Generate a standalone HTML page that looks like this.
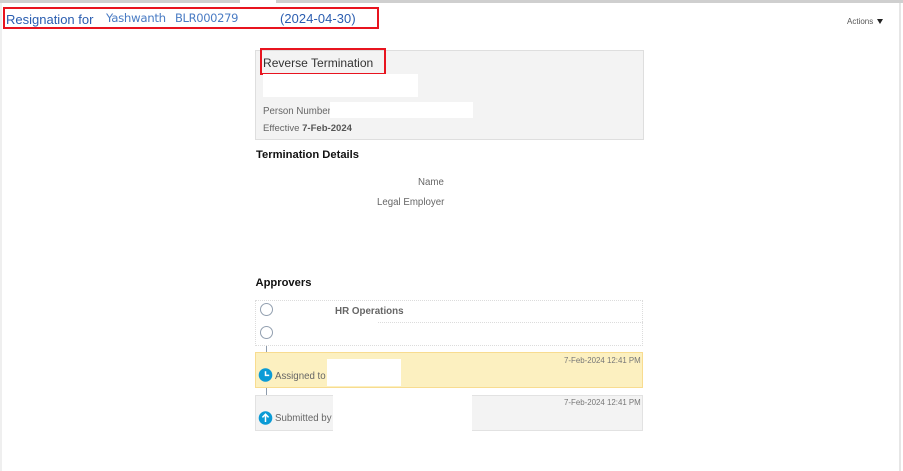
<!DOCTYPE html>
<html>
<head>
<meta charset="utf-8">
<style>
html,body{margin:0;padding:0;background:#fff;}
body{width:903px;height:471px;position:relative;overflow:hidden;font-family:"Liberation Sans",sans-serif;}
.a{position:absolute;box-sizing:border-box;}
.t{position:absolute;white-space:nowrap;line-height:1;color:#666;font-size:9.7px;filter:blur(.35px);}
</style>
</head>
<body>
<!-- top strip -->
<div class="a" style="left:0;top:0;width:240px;height:3px;background:#cfcfcf"></div>
<div class="a" style="left:276px;top:0;width:627px;height:3px;background:#cfcfcf"></div>
<div class="a" style="left:0;top:3px;width:2px;height:468px;background:#efefef"></div>
<div class="a" style="left:899px;top:3px;width:2px;height:468px;background:#e6e6e6"></div>

<!-- title -->
<div class="a" style="left:3px;top:7px;width:376px;height:22px;border:2px solid #e8141f"></div>
<div class="t" style="left:6px;top:12.5px;font-size:13px;color:#2a5db0">Resignation for</div>
<div class="t" style="left:106px;top:12.5px;font-size:11.8px;color:#4a7cc4;font-family:'DejaVu Sans',sans-serif;letter-spacing:-.35px">Yashwanth</div>
<div class="t" style="left:175px;top:12.5px;font-size:11.5px;color:#4a7cc4;font-family:'DejaVu Sans',sans-serif;letter-spacing:-.35px">BLR000279</div>
<div class="t" style="left:280px;top:12.5px;font-size:12.9px;color:#2a5db0;letter-spacing:.1px">(2024-04-30)</div>

<!-- actions -->
<div class="t" style="left:847px;top:17.5px;font-size:8px;color:#555">Actions</div>
<div class="a" style="left:877px;top:19px;width:0;height:0;border-left:3.5px solid transparent;border-right:3.5px solid transparent;border-top:5px solid #222"></div>

<!-- header panel -->
<div class="a" style="left:255px;top:50px;width:389px;height:90px;background:#f3f3f3;border:1px solid #dedede"></div>
<div class="a" style="left:260px;top:48px;width:126px;height:27px;border:2px solid #e8141f"></div>
<div class="t" style="left:263px;top:56.5px;font-size:12.05px;color:#333">Reverse Termination</div>
<div class="a" style="left:263px;top:74px;width:155px;height:23px;background:#fff"></div>
<div class="t" style="left:263px;top:106.5px">Person Number</div>
<div class="a" style="left:330px;top:102px;width:143px;height:16px;background:#fff"></div>
<div class="t" style="left:263px;top:123.5px;font-size:9.55px">Effective <b style="color:#555">7-Feb-2024</b></div>

<!-- termination details -->
<div class="t" style="left:256px;top:149.5px;font-size:11.2px;font-weight:bold;color:#111">Termination Details</div>
<div class="t" style="left:418px;top:177.5px">Name</div>
<div class="t" style="left:377px;top:198px">Legal Employer</div>

<!-- approvers -->
<div class="t" style="left:255.5px;top:277.5px;font-size:11.2px;font-weight:bold;color:#111">Approvers</div>

<div class="a" style="left:255px;top:300px;width:388px;height:46px;border:1px dotted #dcdcdc"></div>
<div class="a" style="left:378px;top:322px;width:265px;height:1px;border-top:1px dotted #dcdcdc"></div>
<div class="a" style="left:260px;top:303px;width:13px;height:13px;border:1.5px solid #93a0b0;border-radius:50%;background:#fff"></div>
<div class="a" style="left:260px;top:326px;width:13px;height:13px;border:1.5px solid #93a0b0;border-radius:50%;background:#fff"></div>
<div class="t" style="left:335px;top:306.5px;font-size:9.8px;font-weight:bold;color:#666">HR Operations</div>

<div class="a" style="left:266px;top:346px;width:1px;height:6px;background:#8e9bab"></div>

<!-- assigned -->
<div class="a" style="left:255px;top:352px;width:388px;height:36px;background:#fcf0c0;border:1px solid #f8dc90"></div>
<div class="t" style="left:564px;top:356.5px;font-size:7.9px;color:#777">7-Feb-2024 12:41 PM</div>
<svg class="a" style="left:258px;top:368px" width="15" height="14" viewBox="0 0 15 14">
<circle cx="7.5" cy="7" r="6.8" fill="#0a9bd6"/>
<path d="M7.5 3.2V7.4H11.2" fill="none" stroke="#fff" stroke-width="1.5"/>
</svg>
<div class="t" style="left:275px;top:372px">Assigned to</div>
<div class="a" style="left:327px;top:359px;width:74px;height:27px;background:#fff"></div>

<div class="a" style="left:266px;top:388px;width:1px;height:7px;background:#8e9bab"></div>

<!-- submitted -->
<div class="a" style="left:255px;top:395px;width:388px;height:36px;background:#f3f3f3;border:1px solid #e2e2e2"></div>
<div class="t" style="left:564px;top:398.5px;font-size:7.9px;color:#777">7-Feb-2024 12:41 PM</div>
<svg class="a" style="left:258px;top:411px" width="15" height="14" viewBox="0 0 15 14">
<circle cx="7.5" cy="7" r="6.8" fill="#0a9bd6"/>
<path d="M7.5 11V3.4M4.4 6.4L7.5 3.2L10.6 6.4" fill="none" stroke="#fff" stroke-width="1.5"/>
</svg>
<div class="t" style="left:275px;top:414px">Submitted by</div>
<div class="a" style="left:333px;top:395px;width:139px;height:36px;background:#fff"></div>
</body>
</html>
